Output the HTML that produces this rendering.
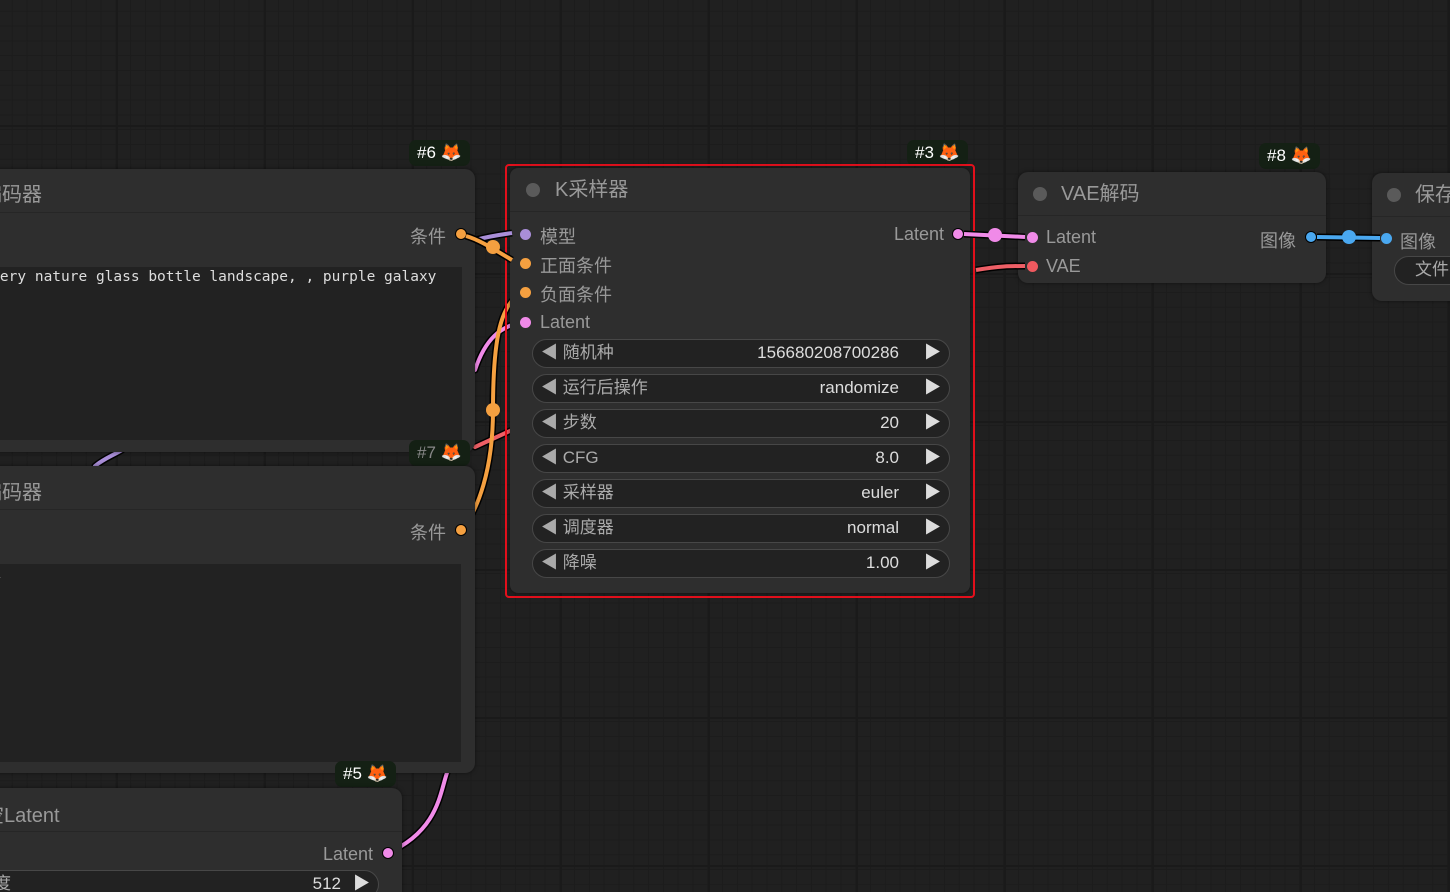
<!DOCTYPE html>
<html><head><meta charset="utf-8"><style>
*{margin:0;padding:0;box-sizing:border-box}
html,body{width:1450px;height:892px;overflow:hidden}
body{position:relative;background-color:#202020;
background-image:linear-gradient(#1a1a1a 2px,transparent 2px),linear-gradient(90deg,#1a1a1a 2px,transparent 2px),linear-gradient(#1c1c1c 1px,transparent 1px),linear-gradient(90deg,#1c1c1c 1px,transparent 1px);
background-size:148px 148px,148px 148px,14.8px 14.8px,14.8px 14.8px;background-position:-32px -23px,-32px -23px,-3px -4px,-3px -4px;
font-family:"Liberation Sans","Noto Sans CJK SC",sans-serif;color:#aaa}
.node{position:absolute;background:#2e2e2e;border-radius:10px;box-shadow:0 0 4px rgba(0,0,0,.5);overflow:hidden}
.title{position:absolute;left:0;right:0;top:0;height:44px;border-bottom:1px solid #262626;font-size:20px;color:#999;line-height:44px;white-space:nowrap}
.dotg{position:absolute;width:14px;height:14px;border-radius:50%;background:#5a5a5a;top:15px}
.t{position:absolute;font-size:18px;color:#999;white-space:nowrap}
.s{position:absolute;width:11px;height:11px;border-radius:50%}
.so{border:1.5px solid #000;width:12px;height:12px}
.badge{position:absolute;background:#142014;border-radius:7px;height:26px;color:#fff;font-size:17px;line-height:26px;padding:0 8px;white-space:nowrap}
.w{position:absolute;height:29px;border:1.5px solid #474747;border-radius:15px;background:#222;font-size:17px;line-height:26px;white-space:nowrap}
.w .l{position:absolute;left:8px;color:#aaa}
.w .v{position:absolute;right:50px;color:#ddd}
.w .r{position:absolute;right:8px;color:#ddd}
.ta{position:absolute;background:#222;font-family:"DejaVu Sans Mono","Liberation Mono",monospace;font-size:14.5px;color:#ddd;padding:2px 0 0 0;white-space:nowrap;overflow:hidden}
svg{position:absolute;left:0;top:0}
</style></head><body>
<svg width="1450" height="892" style="z-index:0">
<g fill="none" stroke-linecap="round">
<g stroke="#000" stroke-width="7">
<path d="M95,466 C105,458 112,456 122,450"/>
<path d="M475,447 L512,430"/>
<path d="M475,370 C485,340 500,325 525,322"/>
<path d="M461,531 C478,510 493,470 493,410 C493,340 500,300 525,292"/>
<path d="M388,853 C440,830 440,790 448,770"/>
</g>
<path d="M95,466 C105,458 112,456 122,450" stroke="#a98ed8" stroke-width="4"/>
<path d="M475,447 L512,430" stroke="#ee5f66" stroke-width="4"/>
<path d="M475,370 C485,340 500,325 525,322" stroke="#f08ae8" stroke-width="4"/>
<path d="M461,531 C478,510 493,470 493,410 C493,340 500,300 525,292" stroke="#f5a040" stroke-width="4"/>
<path d="M388,853 C440,830 440,790 448,770" stroke="#f08ae8" stroke-width="4"/>
</g>
<circle cx="493" cy="410" r="7" fill="#f5a040"/>
</svg>

<div class="badge" style="left:409px;top:140px">#6 🦊</div>
<div class="node" style="left:-20px;top:169px;width:495px;height:283px">
 <div class="title"></div>
 <div class="t" style="left:2px;top:9px;font-size:20px">编码器</div>
 <div class="t" style="right:29px;top:54px">条件</div>
 <div class="s so" style="right:8px;top:59px;background:#f5a040"></div>
 <div class="ta" style="left:0;top:98px;width:482px;height:173px;text-indent:-15px">mystery nature glass bottle landscape, , purple galaxy</div>
</div>

<div class="badge" style="left:409px;top:440px;color:#888">#7 🦊</div>
<div class="node" style="left:-20px;top:466px;width:495px;height:307px">
 <div class="title"></div>
 <div class="t" style="left:2px;top:10px;font-size:20px">编码器</div>
 <div class="t" style="right:29px;top:53px">条件</div>
 <div class="s so" style="right:8px;top:58px;background:#f5a040"></div>
 <div class="ta" style="left:0;top:98px;width:481px;height:198px;text-indent:12px">k</div>
</div>

<div class="badge" style="left:335px;top:761px">#5 🦊</div>
<div class="node" style="left:-20px;top:788px;width:422px;height:120px">
 <div class="title"></div>
 <div class="t" style="left:4px;top:11px;font-size:20px">空Latent</div>
 <div class="t" style="right:29px;top:56px">Latent</div>
 <div class="s so" style="right:8px;top:59px;background:#f08ae8"></div>
 <div class="w" style="left:-20px;top:82px;width:419px"><span class="l" style="left:16px">宽度</span><span class="v" style="right:37px">512</span><span class="r">▶</span></div>
</div>

<div class="badge" style="left:907px;top:140px">#3 🦊</div>
<div style="position:absolute;left:505px;top:164px;width:470px;height:434px;border:2px solid #e5101c;border-radius:4px"></div>
<div class="node" style="left:510px;top:168px;width:460px;height:425px;border-radius:8px">
 <div class="title" style="padding-left:45px">K采样器</div>
 <div class="dotg" style="left:16px"></div>
 <div class="s" style="left:10px;top:61px;background:#a98ed8"></div>
 <div class="t" style="left:30px;top:55px">模型</div>
 <div class="s" style="left:10px;top:90px;background:#f5a040"></div>
 <div class="t" style="left:30px;top:84px">正面条件</div>
 <div class="s" style="left:10px;top:119px;background:#f5a040"></div>
 <div class="t" style="left:30px;top:113px">负面条件</div>
 <div class="s" style="left:10px;top:149px;background:#f08ae8"></div>
 <div class="t" style="left:30px;top:144px">Latent</div>
 <div class="t" style="right:26px;top:56px">Latent</div>
 <div class="s so" style="right:6px;top:60px;background:#f08ae8"></div>
 <div class="w" style="left:22px;top:171px;width:418px"><span class="l">◀ 随机种</span><span class="v">156680208700286</span><span class="r">▶</span></div>
 <div class="w" style="left:22px;top:206px;width:418px"><span class="l">◀ 运行后操作</span><span class="v">randomize</span><span class="r">▶</span></div>
 <div class="w" style="left:22px;top:241px;width:418px"><span class="l">◀ 步数</span><span class="v">20</span><span class="r">▶</span></div>
 <div class="w" style="left:22px;top:276px;width:418px"><span class="l">◀ CFG</span><span class="v">8.0</span><span class="r">▶</span></div>
 <div class="w" style="left:22px;top:311px;width:418px"><span class="l">◀ 采样器</span><span class="v">euler</span><span class="r">▶</span></div>
 <div class="w" style="left:22px;top:346px;width:418px"><span class="l">◀ 调度器</span><span class="v">normal</span><span class="r">▶</span></div>
 <div class="w" style="left:22px;top:381px;width:418px"><span class="l">◀ 降噪</span><span class="v">1.00</span><span class="r">▶</span></div>
</div>

<div class="badge" style="left:1259px;top:143px">#8 🦊</div>
<div class="node" style="left:1018px;top:172px;width:308px;height:111px">
 <div class="title" style="padding-left:43px">VAE解码</div>
 <div class="dotg" style="left:15px"></div>
 <div class="s" style="left:9px;top:60px;background:#f08ae8"></div>
 <div class="t" style="left:28px;top:55px">Latent</div>
 <div class="s" style="left:9px;top:89px;background:#f0595f"></div>
 <div class="t" style="left:28px;top:84px">VAE</div>
 <div class="t" style="right:30px;top:55px">图像</div>
 <div class="s so" style="right:9px;top:59px;background:#4aa8f0"></div>
</div>

<div class="node" style="left:1372px;top:173px;width:140px;height:128px">
 <div class="title" style="padding-left:43px">保存图像</div>
 <div class="dotg" style="left:15px"></div>
 <div class="s" style="left:9px;top:60px;background:#4aa8f0"></div>
 <div class="t" style="left:28px;top:55px">图像</div>
 <div class="w" style="left:22px;top:83px;width:120px"><span class="l" style="left:20px">文件名前缀</span></div>
</div>

<svg width="1450" height="892" style="z-index:5;pointer-events:none">
<g fill="none">
<path d="M475,240 C490,236 505,234 512,233" stroke="#000" stroke-width="7"/>
<path d="M475,240 C490,236 505,234 512,233" stroke="#a98ed8" stroke-width="4"/>
<path d="M466,236 C480,240 495,250 512,260" stroke="#000" stroke-width="7"/>
<path d="M466,236 C480,240 495,250 512,260" stroke="#f5a040" stroke-width="4"/>
<path d="M964,234 L1025,237" stroke="#000" stroke-width="7"/>
<path d="M964,234 L1025,237" stroke="#f08ae8" stroke-width="4"/>
<path d="M976,270 C1000,266 1010,266 1025,266" stroke="#000" stroke-width="7"/>
<path d="M976,270 C1000,266 1010,266 1025,266" stroke="#ee5f66" stroke-width="4"/>
<path d="M1317,237 L1380,238" stroke="#000" stroke-width="7"/>
<path d="M1317,237 L1380,238" stroke="#4aa8f0" stroke-width="4"/>
</g>
<circle cx="493" cy="247" r="7" fill="#f5a040"/>
<circle cx="995" cy="235" r="7" fill="#f08ae8"/>
<circle cx="1349" cy="237" r="7" fill="#4aa8f0"/>
</svg>
</body></html>
